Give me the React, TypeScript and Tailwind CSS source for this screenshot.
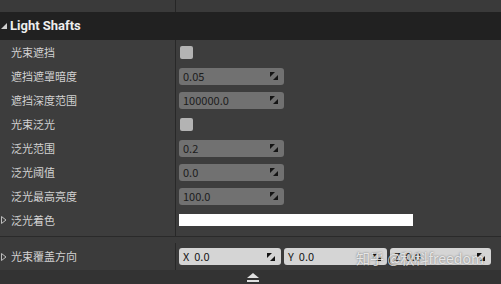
import React from 'react';

const font = '"Noto Sans CJK SC", "Noto Sans", sans-serif';

function SpinIcon() {
  return (
    <svg width="8" height="8" viewBox="0 0 8 8" className="shrink-0">
      <polygon points="0,0 5,0 0,5" fill="#141414" />
      <polygon points="8,3 8,8 3,8" fill="#141414" />
    </svg>
  );
}

function NumberField({ value }: { value: string }) {
  return (
    <div className="flex h-[17px] w-[105px] items-center justify-between rounded-[3px] bg-[#717171] pl-[4px] pr-[6px]">
      <span className="text-[11px] text-[#1c1c1c]">{value}</span>
      <SpinIcon />
    </div>
  );
}

function VectorField({ axis, width }: { axis: string; width: string }) {
  return (
    <div
      className={`flex h-[17px] ${width} items-center justify-between rounded-[3px] bg-[#d5d5d5] pl-[4px] pr-[6px]`}
    >
      <span className="text-[11px] text-[#161616]">
        {axis}&nbsp;&nbsp;0.0
      </span>
      <SpinIcon />
    </div>
  );
}

function Expander() {
  return (
    <svg width="6" height="8" viewBox="0 0 6 8" className="absolute left-[1px]">
      <polygon points="0.5,0.5 5,4 0.5,7.5" fill="none" stroke="#bdbdbd" strokeWidth="1" />
    </svg>
  );
}

function Row({
  label,
  expandable,
  children,
}: {
  label: string;
  expandable?: boolean;
  children: React.ReactNode;
}) {
  return (
    <div className="flex h-[24px]">
      <div className="relative flex w-[175px] items-center pl-[11px] text-[11px] text-[#d2d2d2]">
        {expandable && <Expander />}
        {label}
      </div>
      <div className="w-px bg-[#282828]" />
      <div className="flex flex-1 items-center pl-[3px]">{children}</div>
    </div>
  );
}

function Checkbox() {
  return <div className="ml-px h-[13px] w-[13px] rounded-[2px] bg-[#b3b3b3]" />;
}

export default function App() {
  return (
    <div
      className="relative flex h-[284px] w-[501px] flex-col overflow-hidden bg-[#3d3d3d]"
      style={{ fontFamily: font }}
    >
      <div className="flex h-[12px] bg-[#3a3a3a]">
        <div className="w-[175px]" />
        <div className="w-px bg-[#262626]" />
      </div>

      <div className="flex h-[28px] items-center bg-[#212121]">
        <svg width="6" height="6" viewBox="0 0 6 6" className="ml-[1px] mr-[3px]">
          <polygon points="6,0 6,6 0,6" fill="#cfcfcf" />
        </svg>
        <span
          className="text-[13px] font-bold text-[#eeeeee]"
          style={{ fontFamily: 'Roboto, "Noto Sans", sans-serif' }}
        >
          Light Shafts
        </span>
      </div>

      <Row label="光束遮挡">
        <Checkbox />
      </Row>
      <Row label="遮挡遮罩暗度">
        <NumberField value="0.05" />
      </Row>
      <Row label="遮挡深度范围">
        <NumberField value="100000.0" />
      </Row>
      <Row label="光束泛光">
        <Checkbox />
      </Row>
      <Row label="泛光范围">
        <NumberField value="0.2" />
      </Row>
      <Row label="泛光阈值">
        <NumberField value="0.0" />
      </Row>
      <Row label="泛光最高亮度">
        <NumberField value="100.0" />
      </Row>
      <Row label="泛光着色" expandable>
        <div className="h-[12px] w-[234px] bg-white" />
      </Row>

      <div className="flex h-[4px]">
        <div className="w-[175px]" />
        <div className="w-px bg-[#282828]" />
      </div>
      <div className="h-px bg-[#2a2a2a]" />
      <div className="h-[6px] bg-[#3b3b3b]" />

      <div className="flex h-[27px] bg-[#3b3b3b]">
        <div className="relative flex w-[175px] items-center pl-[11px] text-[11px] text-[#d2d2d2]">
          <Expander />
          光束覆盖方向
        </div>
        <div className="w-px bg-[#282828]" />
        <div className="flex flex-1 items-center gap-[3px] pl-[3px]">
          <VectorField axis="X" width="w-[102px]" />
          <VectorField axis="Y" width="w-[103px]" />
          <VectorField axis="Z" width="w-[101px]" />
        </div>
      </div>

      <div className="flex flex-1 items-center justify-center bg-[#333333] pb-[2px]">
        <svg width="12" height="9" viewBox="0 0 12 9" className="ml-[5px] mt-[3px]">
          <polygon points="6,0 12,5 0,5" fill="#e0e0e0" />
          <rect x="0" y="7" width="12" height="2" fill="#e0e0e0" />
        </svg>
      </div>

      <div className="pointer-events-none absolute left-[356px] top-[249px] whitespace-nowrap text-[14px] leading-[18px] text-white/75 [text-shadow:0_0_2px_rgba(0,0,0,0.5)]">
        知乎 @秋科freedom
      </div>
    </div>
  );
}
